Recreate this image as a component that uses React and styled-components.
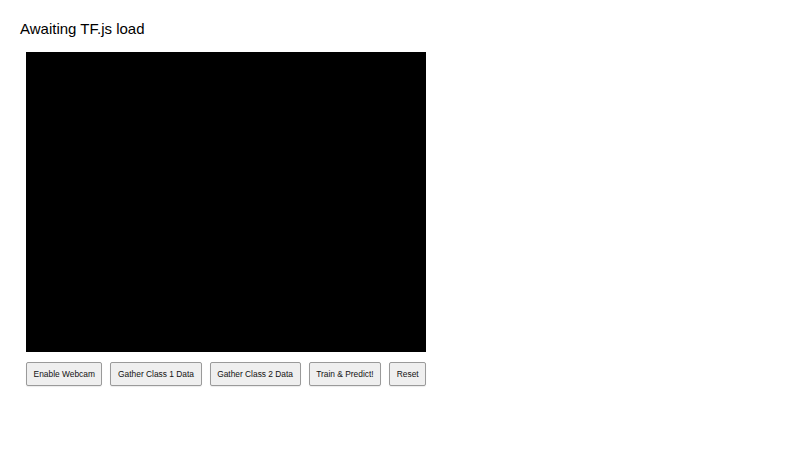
import React from "react";
import styled, { createGlobalStyle } from "styled-components";

const GlobalStyle = createGlobalStyle`
  body {
    margin: 0;
    background: #ffffff;
    font-family: "Liberation Sans", Arial, sans-serif;
  }
`;

const Page = styled.div`
  padding: 20px;
  display: flex;
  flex-direction: column;
  align-items: flex-start;
`;

const Status = styled.p`
  margin: 0;
  font-size: 15px;
  line-height: 17px;
  color: #000;
`;

const Video = styled.div`
  margin: 15px 0 0 6px;
  width: 400px;
  height: 300px;
  background: #000;
`;

const Controls = styled.div`
  display: flex;
  gap: 8px;
  margin: 10px 0 0 6px;
`;

const Button = styled.button`
  height: 24px;
  padding: 0 6.6px;
  font-family: "Liberation Sans", Arial, sans-serif;
  font-size: 8.4px;
  color: #111;
  background: #efefef;
  border: 1px solid #9a9a9a;
  border-radius: 2px;
  box-shadow: 0 1px 1px rgba(0, 0, 0, 0.08);
  cursor: pointer;
`;

const buttons = [
  "Enable Webcam",
  "Gather Class 1 Data",
  "Gather Class 2 Data",
  "Train & Predict!",
  "Reset",
];

export default function App() {
  return (
    <>
      <GlobalStyle />
      <Page>
        <Status>Awaiting TF.js load</Status>
        <Video />
        <Controls>
          {buttons.map((label) => (
            <Button key={label}>{label}</Button>
          ))}
        </Controls>
      </Page>
    </>
  );
}
